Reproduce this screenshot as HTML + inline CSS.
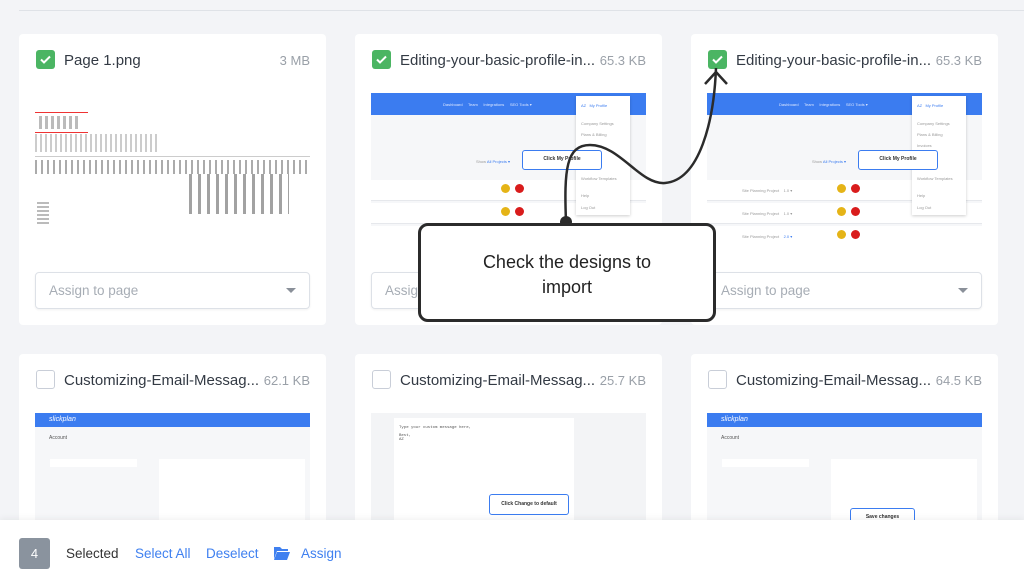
<!DOCTYPE html>
<html><head><style>
*{margin:0;padding:0;box-sizing:border-box}
body{width:1024px;height:575px;overflow:hidden;background:#f3f4f7;font-family:"Liberation Sans",sans-serif;position:relative}
.a{position:absolute}
.card{position:absolute;background:#fff;border-radius:4px;width:307px}
.cb{position:absolute;left:17px;top:16px;width:19px;height:19px;border-radius:3px}
.cb.on{background:#4bb563}
.cb.off{border:1.5px solid #c9ced8;background:#fff}
.tt{position:absolute;left:45px;top:18px;font-size:15px;color:#333a44;white-space:nowrap}
.sz{position:absolute;right:16px;top:19px;font-size:13px;color:#9aa0a8}
.dd{position:absolute;left:16px;top:238px;width:275px;height:37px;border:1px solid #dde1e7;border-radius:4px;box-shadow:0 1px 2px rgba(0,0,0,.06)}
.dd span{position:absolute;left:13px;top:10px;font-size:13.5px;color:#a7adb5}
.dd i{position:absolute;right:13px;top:15px;border-left:5px solid transparent;border-right:5px solid transparent;border-top:5px solid #8a9099}
.th{position:absolute;left:16px;top:59px;width:275px;height:153px;overflow:hidden}
.tx{position:absolute;font-size:4px;color:#999;white-space:nowrap}
.row{position:absolute;left:0;width:275px;height:21px;background:#fff;border-bottom:1px solid #e6e8ec}
.av{position:absolute;width:9px;height:9px;border-radius:50%}
</style></head><body>
<div class="a" style="left:19px;top:10px;width:1005px;height:1px;background:#dfe2e7"></div>

<div class="card" style="left:19px;top:34px;height:291px">
 <div class="cb on"><svg width="19" height="19"><path d="M5 9.5l3 3 6-6" stroke="#fff" stroke-width="2" fill="none"/></svg></div>
 <div class="tt">Page 1.png</div><div class="sz">3 MB</div>
 <div class="a" style="left:16px;top:78px;width:53px;height:1px;background:#e33"></div>
 <div class="a" style="left:16px;top:98px;width:53px;height:1px;background:#e33"></div>
 <div class="a" style="left:20px;top:82px;width:40px;height:13px;background:repeating-linear-gradient(90deg,#bbb 0 3px,#fff 3px 6px)"></div>
 <div class="a" style="left:16px;top:100px;width:122px;height:18px;background:repeating-linear-gradient(90deg,#999 0 2px,#fff 2px 5px);opacity:.5"></div>
 <div class="a" style="left:16px;top:122px;width:275px;height:1px;background:#ccc"></div>
 <div class="a" style="left:16px;top:126px;width:275px;height:14px;background:repeating-linear-gradient(90deg,#666 0 2px,#fff 2px 6px);opacity:.55"></div>
 <div class="a" style="left:170px;top:140px;width:100px;height:40px;background:repeating-linear-gradient(90deg,#444 0 3px,#fff 3px 9px);opacity:.5"></div>
 <div class="a" style="left:18px;top:168px;width:12px;height:22px;background:repeating-linear-gradient(0deg,#777 0 2px,#fff 2px 4px);opacity:.5"></div>
 <div class="dd"><span>Assign to page</span><i></i></div>
</div>

<div class="card" style="left:355px;top:34px;height:291px">
 <div class="cb on"><svg width="19" height="19"><path d="M5 9.5l3 3 6-6" stroke="#fff" stroke-width="2" fill="none"/></svg></div>
 <div class="tt">Editing-your-basic-profile-in...</div><div class="sz">65.3 KB</div>
 <div class="th" style="background:#f6f7f9">
  <div class="a" style="left:0;top:0;width:275px;height:22px;background:#3b7cf0"></div>
  <div class="tx" style="left:72px;top:9px;color:#dbe6ff">Dashboard &nbsp;&nbsp;&nbsp; Team &nbsp;&nbsp;&nbsp; Integrations &nbsp;&nbsp;&nbsp; SEO Tools ▾</div>
  <div class="row" style="top:87px"></div><div class="row" style="top:110px"></div><div class="row" style="top:133px"></div>
  <div class="av" style="left:130px;top:91px;background:#e5b417"></div><div class="av" style="left:144px;top:91px;background:#d91c1c"></div>
  <div class="av" style="left:130px;top:114px;background:#e5b417"></div><div class="av" style="left:144px;top:114px;background:#d91c1c"></div>
  <div class="a" style="left:205px;top:3px;width:54px;height:119px;background:#fff;box-shadow:0 1px 3px rgba(0,0,0,.2)"></div>
  <div class="tx" style="left:210px;top:10px;color:#3b7cf0">AZ &nbsp; My Profile</div>
  <div class="tx" style="left:210px;top:28px">Company Settings</div>
  <div class="tx" style="left:210px;top:39px">Plans &amp; Billing</div>
  <div class="tx" style="left:210px;top:83px">Workflow Templates</div>
  <div class="tx" style="left:210px;top:100px">Help</div>
  <div class="tx" style="left:210px;top:112px">Log Out</div>
  <div class="a" style="left:151px;top:57px;width:80px;height:20px;border:1.5px solid #3b7cf0;border-radius:3px;background:#fff;font-size:5px;font-weight:bold;text-align:center;line-height:17px;color:#333">Click My Profile</div>
  <div class="tx" style="left:105px;top:66px">Show <span style="color:#3b7cf0">All Projects ▾</span></div>
 </div>
 <div class="dd"><span>Assign to page</span><i></i></div>
</div>

<div class="card" style="left:691px;top:34px;height:291px">
 <div class="cb on"><svg width="19" height="19"><path d="M5 9.5l3 3 6-6" stroke="#fff" stroke-width="2" fill="none"/></svg></div>
 <div class="tt">Editing-your-basic-profile-in...</div><div class="sz">65.3 KB</div>
 <div class="th" style="background:#f6f7f9">
  <div class="a" style="left:0;top:0;width:275px;height:22px;background:#3b7cf0"></div>
  <div class="tx" style="left:72px;top:9px;color:#dbe6ff">Dashboard &nbsp;&nbsp;&nbsp; Team &nbsp;&nbsp;&nbsp; Integrations &nbsp;&nbsp;&nbsp; SEO Tools ▾</div>
  <div class="row" style="top:87px"></div><div class="row" style="top:110px"></div><div class="row" style="top:133px"></div>
  <div class="tx" style="left:35px;top:95px">Site Planning Project &nbsp;&nbsp; 1.0 ▾</div>
  <div class="tx" style="left:35px;top:118px">Site Planning Project &nbsp;&nbsp; 1.0 ▾</div>
  <div class="tx" style="left:35px;top:141px">Site Planning Project &nbsp;&nbsp; <span style="color:#3b7cf0">2.0 ▾</span></div>
  <div class="av" style="left:130px;top:91px;background:#e5b417"></div><div class="av" style="left:144px;top:91px;background:#d91c1c"></div>
  <div class="av" style="left:130px;top:114px;background:#e5b417"></div><div class="av" style="left:144px;top:114px;background:#d91c1c"></div>
  <div class="av" style="left:130px;top:137px;background:#e5b417"></div><div class="av" style="left:144px;top:137px;background:#d91c1c"></div>
  <div class="a" style="left:205px;top:3px;width:54px;height:119px;background:#fff;box-shadow:0 1px 3px rgba(0,0,0,.2)"></div>
  <div class="tx" style="left:210px;top:10px;color:#3b7cf0">AZ &nbsp; My Profile</div>
  <div class="tx" style="left:210px;top:28px">Company Settings</div>
  <div class="tx" style="left:210px;top:39px">Plans &amp; Billing</div>
  <div class="tx" style="left:210px;top:50px">Invoices</div>
  <div class="tx" style="left:210px;top:83px">Workflow Templates</div>
  <div class="tx" style="left:210px;top:100px">Help</div>
  <div class="tx" style="left:210px;top:112px">Log Out</div>
  <div class="a" style="left:151px;top:57px;width:80px;height:20px;border:1.5px solid #3b7cf0;border-radius:3px;background:#fff;font-size:5px;font-weight:bold;text-align:center;line-height:17px;color:#333">Click My Profile</div>
  <div class="tx" style="left:105px;top:66px">Show <span style="color:#3b7cf0">All Projects ▾</span></div>
 </div>
 <div class="dd"><span>Assign to page</span><i></i></div>
</div>

<div class="card" style="left:19px;top:354px;height:200px">
 <div class="cb off"></div><div class="tt">Customizing-Email-Messag...</div><div class="sz">62.1 KB</div>
 <div class="a" style="left:16px;top:59px;width:275px;height:120px;background:#f6f7f9">
  <div class="a" style="left:0;top:0;width:275px;height:14px;background:#3b7cf0"></div>
  <div class="tx" style="left:14px;top:3px;font-size:7px;color:#fff;font-style:italic">slickplan</div>
  <div class="tx" style="left:14px;top:22px;font-size:5px;color:#555">Account</div>
  <div class="a" style="left:15px;top:46px;width:87px;height:8px;background:#fff"></div>
  <div class="a" style="left:124px;top:46px;width:146px;height:70px;background:#fff"></div>
 </div>
</div>
<div class="card" style="left:355px;top:354px;height:200px">
 <div class="cb off"></div><div class="tt">Customizing-Email-Messag...</div><div class="sz">25.7 KB</div>
 <div class="a" style="left:16px;top:59px;width:275px;height:120px;background:#f3f4f6">
  <div class="a" style="left:23px;top:5px;width:180px;height:110px;background:#fff"></div>
  <div class="tx" style="left:28px;top:13px;font-family:'Liberation Mono';color:#555">Type your custom message here,<br><br>Best,<br>AZ</div>
  <div class="a" style="left:118px;top:81px;width:80px;height:21px;border:1.5px solid #3b7cf0;border-radius:3px;background:#fff;font-size:5px;font-weight:bold;text-align:center;line-height:18px;color:#333">Click Change to default</div>
 </div>
</div>
<div class="card" style="left:691px;top:354px;height:200px">
 <div class="cb off"></div><div class="tt">Customizing-Email-Messag...</div><div class="sz">64.5 KB</div>
 <div class="a" style="left:16px;top:59px;width:275px;height:120px;background:#f6f7f9">
  <div class="a" style="left:0;top:0;width:275px;height:14px;background:#3b7cf0"></div>
  <div class="tx" style="left:14px;top:3px;font-size:7px;color:#fff;font-style:italic">slickplan</div>
  <div class="tx" style="left:14px;top:22px;font-size:5px;color:#555">Account</div>
  <div class="a" style="left:15px;top:46px;width:87px;height:8px;background:#fff"></div>
  <div class="a" style="left:124px;top:46px;width:146px;height:70px;background:#fff"></div>
  <div class="a" style="left:143px;top:95px;width:65px;height:20px;border:1.5px solid #3b7cf0;border-radius:3px;background:#fff;font-size:5px;font-weight:bold;text-align:center;line-height:17px;color:#333">Save changes</div>
 </div>
</div>

<svg class="a" style="left:0;top:0" width="1024" height="575">
 <path d="M566 222 C564 170 566 145 590 145 C620 145 640 185 665 183 C700 180 714 120 716 68" stroke="#2b2b2b" stroke-width="2.5" fill="none"/>
 <path d="M705 84 L716 72 L727 84" stroke="#2b2b2b" stroke-width="2.5" fill="none"/>
 <circle cx="566" cy="222" r="6" fill="#2b2b2b"/>
</svg>
<div class="a" style="left:418px;top:223px;width:298px;height:99px;background:#fff;border:3px solid #2b2b2b;border-radius:10px;text-align:center;font-size:18px;line-height:25px;color:#222;padding-top:24px">Check the designs to<br>import</div>

<div class="a" style="left:0;top:520px;width:1024px;height:55px;background:#fff;box-shadow:0 -2px 6px rgba(0,0,0,.05)">
 <div class="a" style="left:19px;top:18px;width:31px;height:31px;background:#8a939e;border-radius:3px;color:#fff;font-size:13px;text-align:center;line-height:31px">4</div>
 <div class="a" style="left:66px;top:26px;font-size:13.5px;color:#333">Selected</div>
 <div class="a" style="left:135px;top:26px;font-size:13.5px;color:#3f80f0">Select All</div>
 <div class="a" style="left:206px;top:26px;font-size:13.5px;color:#3f80f0">Deselect</div>
 <svg class="a" style="left:274px;top:26px" width="16" height="14"><path d="M0 1h6l2 2h6v2H3L0 13z" fill="#3f80f0"/><path d="M3 6h13l-3 8H0z" fill="#3f80f0"/></svg>
 <div class="a" style="left:301px;top:26px;font-size:13.5px;color:#3f80f0">Assign</div>
</div>
</body></html>
